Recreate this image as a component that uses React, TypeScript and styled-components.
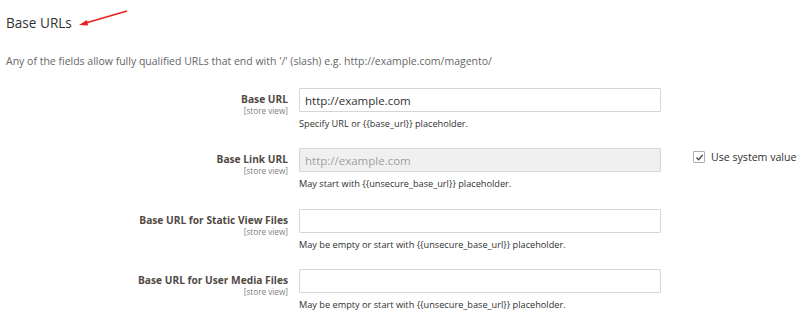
import React from "react";
import styled, { createGlobalStyle } from "styled-components";

const GlobalStyle = createGlobalStyle`
  html, body {
    margin: 0;
    padding: 0;
    background: #ffffff;
  }
  body {
    font-family: "Open Sans", "Liberation Sans", Arial, sans-serif;
    color: #303030;
  }
`;

const Page = styled.div`
  width: 800px;
  height: 329px;
  padding: 0 0 0 6px;
  box-sizing: border-box;
  overflow: hidden;
`;

const Header = styled.div`
  display: flex;
  align-items: flex-end;
  height: 32px;
`;

const Title = styled.h2`
  margin: 0;
  font-size: 13.6px;
  font-weight: 400;
  color: #303030;
  line-height: 16px;
  padding-bottom: 1px;
`;

const Arrow = styled.svg`
  margin-left: 6px;
  margin-bottom: 5px;
`;

const Intro = styled.p`
  margin: 22px 0 0 0;
  font-size: 10.5px;
  line-height: 14px;
  color: #666666;
`;

const Fields = styled.div`
  margin-top: 20px;
  display: flex;
  flex-direction: column;
  gap: 18.4px;
`;

const Row = styled.div`
  display: grid;
  grid-template-columns: 293px 362px 32px 1fr;
  align-items: start;
`;

const LabelCol = styled.div`
  display: flex;
  flex-direction: column;
  align-items: flex-end;
  padding: 5px 11px 0 0;
`;

const LabelText = styled.label`
  font-size: 10.2px;
  font-weight: 700;
  color: #514943;
  line-height: 13px;
`;

const Scope = styled.span`
  font-size: 8.2px;
  color: #808080;
  line-height: 10px;
`;

const Control = styled.div`
  display: flex;
  flex-direction: column;
`;

const Input = styled.input<{ disabled?: boolean }>`
  box-sizing: border-box;
  width: 362px;
  height: 24px;
  margin: 0;
  padding: 0 5px;
  border: 1px solid #d6d6d6;
  border-radius: 1px;
  font-family: inherit;
  font-size: 11.5px;
  color: #303030;
  background: ${(p) => (p.disabled ? "#f0f0f0" : "#ffffff")};
  outline: none;

  &:disabled {
    color: #a0a0a0;
    opacity: 1;
  }
`;

const Note = styled.div`
  margin-top: 5px;
  font-size: 9.2px;
  line-height: 13px;
  color: #303030;
`;

const SystemValue = styled.label`
  display: flex;
  align-items: center;
  gap: 6px;
  padding-top: 2px;
  font-size: 10.6px;
  color: #303030;
`;

const Box = styled.span`
  width: 12px;
  height: 12px;
  box-sizing: border-box;
  border: 1px solid #adadad;
  border-radius: 1px;
  display: flex;
  align-items: center;
  justify-content: center;
  background: #fff;
`;

type Field = {
  label: string;
  value?: string;
  disabled?: boolean;
  note: string;
  system?: boolean;
};

const fields: Field[] = [
  { label: "Base URL", value: "http://example.com", note: "Specify URL or {{base_url}} placeholder." },
  {
    label: "Base Link URL",
    value: "http://example.com",
    disabled: true,
    note: "May start with {{unsecure_base_url}} placeholder.",
    system: true,
  },
  { label: "Base URL for Static View Files", note: "May be empty or start with {{unsecure_base_url}} placeholder." },
  { label: "Base URL for User Media Files", note: "May be empty or start with {{unsecure_base_url}} placeholder." },
];

const App = () => {
  return (
    <>
      <GlobalStyle />
      <Page>
        <Header>
          <Title>Base URLs</Title>
          <Arrow width="52" height="18" viewBox="0 0 52 18">
            <line x1="49" y1="2" x2="6" y2="14.5" stroke="#ee1c1c" strokeWidth="1.4" />
            <polygon points="1,16 9,11 10,16.5" fill="#ee1c1c" />
          </Arrow>
        </Header>
        <Intro>
          Any of the fields allow fully qualified URLs that end with '/' (slash) e.g. http://example.com/magento/
        </Intro>
        <Fields>
          {fields.map((f) => (
            <Row key={f.label}>
              <LabelCol>
                <LabelText>{f.label}</LabelText>
                <Scope>[store view]</Scope>
              </LabelCol>
              <Control>
                <Input defaultValue={f.value ?? ""} disabled={f.disabled} readOnly />
                <Note>{f.note}</Note>
              </Control>
              <div />
              {f.system ? (
                <SystemValue>
                  <Box>
                    <svg width="9" height="9" viewBox="0 0 9 9">
                      <path d="M1.5 4.6 L3.6 6.7 L7.6 2" fill="none" stroke="#514943" strokeWidth="1.4" />
                    </svg>
                  </Box>
                  Use system value
                </SystemValue>
              ) : (
                <div />
              )}
            </Row>
          ))}
        </Fields>
      </Page>
    </>
  );
};

export default App;
